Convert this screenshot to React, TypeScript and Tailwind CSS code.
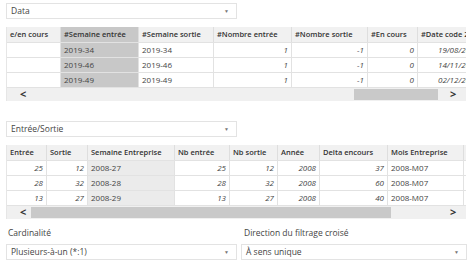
import React from "react";

type Col = { w: number; label: string; hl?: "dark" | "light"; pl?: number };
type Cell = { t: string; i?: boolean; r?: boolean };

function Dropdown({ text, w, h }: { text: string; w: string; h: string }) {
  return (
    <div className={`${w} ${h} flex items-center justify-between border border-[#e3e3e3] bg-white pl-[4px] pr-[7px] text-[#444]`}>
      <span className="text-[8.5px] leading-none">{text}</span>
      <span className="text-[5px] leading-none text-[#777]">▼</span>
    </div>
  );
}

function Table({ cols, rows, thumbLeft, thumbWidth }: { cols: Col[]; rows: Cell[][]; thumbLeft: number; thumbWidth: number }) {
  return (
    <div className="w-[460px] overflow-hidden border-l border-[#e6e6e6]">
      <div className="flex h-[15px] bg-[#f1f1f1]">
        {cols.map((c, i) => (
          <div
            key={i}
            style={{ width: c.w }}
            className={`shrink-0 overflow-hidden whitespace-nowrap border-r border-[#dedede] px-[3px] flex items-center text-[7.5px] font-semibold text-[#333] ${c.hl === "dark" ? "bg-[#c8c8c8]" : ""}`}
          >
            {c.label}
          </div>
        ))}
      </div>
      {rows.map((r, ri) => (
        <div key={ri} className="flex h-[15px] border-t border-[#e2e2e2] bg-white">
          {r.map((cell, ci) => {
            const c = cols[ci];
            const bg = c.hl === "dark" ? "bg-[#c8c8c8]" : c.hl === "light" ? "bg-[#ebebeb]" : "";
            return (
              <div
                key={ci}
                style={{ width: c.w, paddingLeft: c.pl ?? 3 }}
                className={`shrink-0 overflow-hidden whitespace-nowrap border-r border-[#e2e2e2] pr-[3px] flex items-center text-[8px] text-[#444] ${bg} ${cell.r ? "justify-end" : "justify-start"} ${cell.i ? "italic" : ""}`}
              >
                {cell.t}
              </div>
            );
          })}
        </div>
      ))}
      <div className="relative h-[14px] border-t border-[#e2e2e2] bg-[#f0f0f0]">
        <div className="absolute top-[1px] bottom-[1px] bg-[#c9c9c9]" style={{ left: thumbLeft, width: thumbWidth }} />
        <span className="absolute left-[13px] top-[-1px] text-[11px] font-bold leading-[14px] text-[#333]">&lt;</span>
        <span className="absolute left-[443px] top-[-1px] text-[11px] font-bold leading-[14px] text-[#333]">&gt;</span>
      </div>
    </div>
  );
}

export default function App() {
  const cols1: Col[] = [
    { w: 54, label: "e/en cours" },
    { w: 78, label: "#Semaine entrée", hl: "dark" },
    { w: 75, label: "#Semaine sortie" },
    { w: 78, label: "#Nombre entrée" },
    { w: 76, label: "#Nombre sortie" },
    { w: 50, label: "#En cours" },
    { w: 70, label: "#Date code 2019", pl: 20 },
  ];
  const rows1: Cell[][] = [
    ["2019-34", "19/08/2019"],
    ["2019-46", "14/11/2019"],
    ["2019-49", "02/12/2019"],
  ].map(([w, d]) => [
    { t: "" },
    { t: w },
    { t: w },
    { t: "1", i: true, r: true },
    { t: "-1", i: true, r: true },
    { t: "0", i: true, r: true },
    { t: d, i: true },
  ]);
  const cols2: Col[] = [
    { w: 40, label: "Entrée" },
    { w: 41, label: "Sortie" },
    { w: 87, label: "Semaine Entreprise", hl: "light" },
    { w: 55, label: "Nb entrée" },
    { w: 48, label: "Nb sortie" },
    { w: 42, label: "Année" },
    { w: 68, label: "Delta encours" },
    { w: 76, label: "Mois Entreprise" },
    { w: 40, label: "" },
  ];
  const data2 = [
    ["25", "12", "2008-27", "25", "12", "2008", "37"],
    ["28", "32", "2008-28", "28", "32", "2008", "60"],
    ["13", "27", "2008-29", "13", "27", "2008", "40"],
  ];
  const rows2: Cell[][] = data2.map((d) => [
    { t: d[0], i: true, r: true },
    { t: d[1], i: true, r: true },
    { t: d[2] },
    { t: d[3], i: true, r: true },
    { t: d[4], i: true, r: true },
    { t: d[5], i: true, r: true },
    { t: d[6], i: true, r: true },
    { t: "2008-M07" },
    { t: "" },
  ]);

  return (
    <div
      className="w-[474px] h-[265px] overflow-hidden bg-white px-[6px] pt-[3px]"
      style={{ fontFamily: '"Open Sans", "Noto Sans", sans-serif' }}
    >
      <Dropdown text="Data" w="w-[231px]" h="h-[16px]" />
      <div className="mt-[8px]">
        <Table cols={cols1} rows={rows1} thumbLeft={347} thumbWidth={84} />
      </div>
      <div className="mt-[20px]">
        <Dropdown text="Entrée/Sortie" w="w-[231px]" h="h-[16px]" />
      </div>
      <div className="mt-[8px]">
        <Table cols={cols2} rows={rows2} thumbLeft={24} thumbWidth={360} />
      </div>
      <div className="mt-[8px] grid grid-cols-[231px_226px] gap-x-[4px]">
        <div className="text-[8.5px] leading-[12px] text-[#444] pl-[2px]">Cardinalité</div>
        <div className="text-[8.5px] leading-[12px] text-[#444] pl-[3px]">Direction du filtrage croisé</div>
        <div className="mt-[5px]">
          <Dropdown text="Plusieurs-à-un (*:1)" w="w-[231px]" h="h-[16px]" />
        </div>
        <div className="mt-[5px]">
          <Dropdown text="À sens unique" w="w-[226px]" h="h-[16px]" />
        </div>
      </div>
    </div>
  );
}
